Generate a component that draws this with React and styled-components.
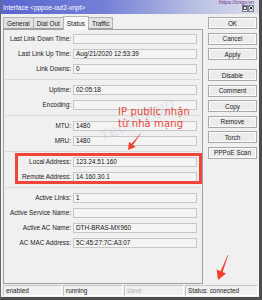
import React from 'react'
import styled, { createGlobalStyle } from 'styled-components'

const GlobalStyle = createGlobalStyle`
  html, body {
    margin: 0;
    padding: 0;
    background: #f0f0f0;
  }
  body {
    font-family: "Liberation Sans", Arial, sans-serif;
  }
`

const Window = styled.div`
  position: relative;
  width: 262px;
  height: 300px;
  box-sizing: border-box;
  background: #f0f0f0;
  border-left: 1px solid #6b6b6b;
  border-right: 3px solid #4d4d4d;
  border-bottom: 3px solid #4d4d4d;
  display: flex;
  flex-direction: column;
  overflow: hidden;
  font-size: 6.4px;
  color: #1c1c1c;
`

const TitleBar = styled.div`
  height: 14px;
  flex: none;
  display: flex;
  align-items: center;
  justify-content: space-between;
  padding: 0 5px 0 2px;
  background: linear-gradient(90deg, #5a66cf 0%, #7480d6 40%, #b9bfe3 75%, #dcdfea 100%);
  color: #fff;
  font-size: 6.5px;
`

const WinButtons = styled.div`
  display: flex;
  margin-top: 2px;
`

const WinButton = styled.div`
  width: 6px;
  height: 7px;
  box-sizing: border-box;
  border: 1px solid #7b7f92;
  background: #e4e6ee;
  display: flex;
  align-items: center;
  justify-content: center;
`

const Body = styled.div`
  flex: 1;
  display: flex;
  gap: 5px;
  padding: 2px 2px 0 2px;
  min-height: 0;
`

const LeftCol = styled.div`
  flex: 1;
  display: flex;
  flex-direction: column;
`

const Tabs = styled.div`
  height: 13px;
  display: flex;
  align-items: flex-end;
  position: relative;
  z-index: 1;
`

const Tab = styled.div`
  height: ${p => (p.$active ? 14 : 12)}px;
  box-sizing: border-box;
  padding: 0 3px;
  display: flex;
  align-items: center;
  border: 1px solid #b4b4b4;
  border-bottom: ${p => (p.$active ? 'none' : '1px solid #a0a0a0')};
  margin-left: -1px;
  margin-bottom: ${p => (p.$active ? -1 : 0)}px;
  background: ${p => (p.$active ? '#f7f7f7' : '#e2e2e2')};
  &:first-child {
    margin-left: 0;
  }
`

const Panel = styled.div`
  flex: 1;
  border: 1px solid #a0a0a0;
  padding-top: 3.5px;
`

const Row = styled.div`
  display: grid;
  grid-template-columns: 67px 1fr;
  column-gap: 2px;
  align-items: center;
  height: 10.5px;
  margin-bottom: 4.5px;
  padding-right: 5px;
`

const Label = styled.div`
  text-align: right;
  white-space: nowrap;
`

const Field = styled.div`
  height: 10.5px;
  box-sizing: border-box;
  border: 1px solid #c6c6c6;
  background: #f4f4f4;
  padding-left: 2px;
  display: flex;
  align-items: center;
  color: #111;
`

const Divider = styled.div`
  height: 1px;
  background: #dadada;
  margin: 0 1px 5px;
`

const ButtonCol = styled.div`
  width: 49px;
  display: flex;
  flex-direction: column;
  padding-top: 1px;
`

const Button = styled.div`
  height: 12px;
  box-sizing: border-box;
  border: 1px solid #a9a9a9;
  background: #ececec;
  box-shadow: inset 0 0 0 1px #fbfbfb;
  display: flex;
  align-items: center;
  justify-content: center;
  margin-bottom: ${p => (p.$gapAfter ? 9 : 3.5)}px;
`

const StatusBar = styled.div`
  height: 11px;
  flex: none;
  margin: 1px 0;
  padding: 0 1px 0 2px;
  display: grid;
  grid-template-columns: 59px 60px 60px 1fr;
  column-gap: 1px;
`

const StatusCell = styled.div`
  box-sizing: border-box;
  border: 1px solid #c4c4c4;
  border-right-color: #fff;
  border-bottom-color: #fff;
  display: flex;
  align-items: center;
  padding-left: 2px;
  color: ${p => (p.$muted ? '#b5b5b5' : '#1c1c1c')};
`

const Overlay = styled.div`
  position: absolute;
  left: -1px;
  top: 0;
  width: 262px;
  height: 300px;
  pointer-events: none;
`

const Url = styled.div`
  position: absolute;
  left: 219px;
  top: -1px;
  font-size: 5.5px;
  white-space: nowrap;
  color: #6b2d8c;
`

const Watermark = styled.div`
  position: absolute;
  left: 100px;
  top: 128px;
  font-size: 17px;
  font-style: italic;
  font-weight: bold;
  white-space: nowrap;
  color: rgba(150, 175, 205, 0.17);
  transform: rotate(-26deg);
  transform-origin: left center;
`

const RedBox = styled.div`
  position: absolute;
  left: 15px;
  top: 153px;
  width: 187px;
  height: 31px;
  box-sizing: border-box;
  border: 3px solid #ef4437;
`

const Note = styled.div`
  position: absolute;
  left: 118px;
  top: 106px;
  font-family: "DejaVu Sans", sans-serif;
  font-size: 10px;
  line-height: 12px;
  letter-spacing: 0.1px;
  color: #e8483c;
  white-space: nowrap;
`

const Arrows = styled.svg`
  position: absolute;
  left: 0;
  top: 0;
`

const rows = [
  [
    ['Last Link Down Time:', ''],
    ['Last Link Up Time:', 'Aug/21/2020 12:53:39'],
    ['Link Downs:', '0'],
  ],
  [
    ['Uptime:', '02:05:18'],
    ['Encoding:', ''],
  ],
  [
    ['MTU:', '1480'],
    ['MRU:', '1480'],
  ],
  [
    ['Local Address:', '123.24.51.160'],
    ['Remote Address:', '14.160.30.1'],
  ],
  [
    ['Active Links:', '1'],
    ['Active Service Name:', ''],
    ['Active AC Name:', 'DTH-BRAS-MX960'],
    ['AC MAC Address:', '5C:45:27:7C:A3:07'],
  ],
]

const buttons = [
  ['OK'],
  ['Cancel'],
  ['Apply', true],
  ['Disable'],
  ['Comment'],
  ['Copy'],
  ['Remove'],
  ['Torch'],
  ['PPPoE Scan'],
]

export default function App() {
  return (
    <>
      <GlobalStyle />
      <Window>
        <TitleBar>
          <span>Interface &lt;pppoe-out2-vnpt&gt;</span>
          <WinButtons>
            <WinButton>
              <svg width="4" height="4" viewBox="0 0 4 4">
                <rect x="0.5" y="0.5" width="3" height="3" fill="none" stroke="#333" strokeWidth="0.8" />
              </svg>
            </WinButton>
            <WinButton>
              <svg width="4" height="4" viewBox="0 0 4 4">
                <path d="M0.5 0.5L3.5 3.5M3.5 0.5L0.5 3.5" stroke="#222" strokeWidth="1" />
              </svg>
            </WinButton>
          </WinButtons>
        </TitleBar>

        <Body>
          <LeftCol>
            <Tabs>
              <Tab>General</Tab>
              <Tab>Dial Out</Tab>
              <Tab $active>Status</Tab>
              <Tab>Traffic</Tab>
            </Tabs>
            <Panel>
              {rows.map((group, gi) => (
                <React.Fragment key={gi}>
                  {gi > 0 && <Divider />}
                  {group.map(([label, value]) => (
                    <Row key={label}>
                      <Label>{label}</Label>
                      <Field>{value}</Field>
                    </Row>
                  ))}
                </React.Fragment>
              ))}
            </Panel>
          </LeftCol>
          <ButtonCol>
            {buttons.map(([text, gap]) => (
              <Button key={text} $gapAfter={gap}>{text}</Button>
            ))}
          </ButtonCol>
        </Body>

        <StatusBar>
          <StatusCell>enabled</StatusCell>
          <StatusCell>running</StatusCell>
          <StatusCell $muted>slave</StatusCell>
          <StatusCell>Status: connected</StatusCell>
        </StatusBar>

        <Overlay>
          <Url>https://cngv.vn</Url>
          <Watermark>Tecto App</Watermark>
          <RedBox />
          <Note>
            IP public nhận
            <br />
            từ nhà mạng
          </Note>
          <Arrows width="262" height="300" viewBox="0 0 262 300">
            <g fill="#f0402f">
              <polygon points="141.3,132.8 140.7,133.2 131.5,143.8 133,145" />
              <polygon points="128,150 129,141.8 135.6,147" />
              <polygon points="228.3,254.9 227.7,255.1 220.2,271.9 222.4,272.7" />
              <polygon points="218,280 216.6,269.6 226,273.4" />
            </g>
          </Arrows>
        </Overlay>
      </Window>
    </>
  )
}
